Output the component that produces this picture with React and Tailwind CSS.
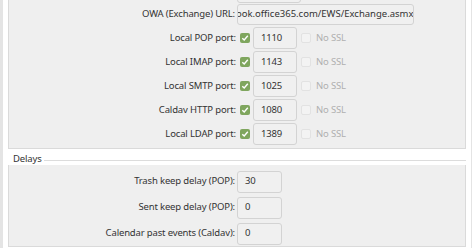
import React from 'react';

const ports = [
  { label: 'Local POP port:', value: '1110' },
  { label: 'Local IMAP port:', value: '1143' },
  { label: 'Local SMTP port:', value: '1025' },
  { label: 'Caldav HTTP port:', value: '1080' },
  { label: 'Local LDAP port:', value: '1389' },
];

const delays = [
  { label: 'Trash keep delay (POP):', value: '30' },
  { label: 'Sent keep delay (POP):', value: '0' },
  { label: 'Calendar past events (Caldav):', value: '0' },
];

function Check() {
  return (
    <span className="w-[10px] h-[10px] rounded-[2px] bg-[#7fa65e] flex items-center justify-center">
      <svg width="8" height="8" viewBox="0 0 8 8">
        <path d="M1.3 4.2 L3.2 6 L6.8 1.8" stroke="white" strokeWidth="1.4" fill="none" />
      </svg>
    </span>
  );
}

function Field({ value, className }) {
  return (
    <div className={`h-[22px] rounded-[3px] border border-[#d3d3d3] bg-[#f0f0f0] flex items-center px-[7px] text-[#333] overflow-hidden whitespace-nowrap ${className}`}>
      {value}
    </div>
  );
}

export default function App() {
  return (
    <div className="w-[474px] h-[248px] overflow-hidden bg-white flex text-[9.5px] tracking-[-0.15px] text-[#333]" style={{ fontFamily: '"Noto Sans", sans-serif' }}>
      <div className="w-[3px] bg-[#e4e4e4]" />
      <div className="w-[5px]" />
      <div className="w-[458px] flex flex-col">
        {/* connection group */}
        <div className="h-[149px] border-l border-r border-b border-[#dadada] bg-[#efefef] flex flex-col">
          <div className="flex mt-[-19px]">
            <div className="w-[228px]" />
            <Field value="" className="w-[64px]" />
          </div>
          <div className="flex items-center mt-[1px]">
            <div className="w-[228px] text-right pr-[2px]">OWA (Exchange) URL:</div>
            <div className="w-[177px] h-[21px] rounded-[3px] border border-[#d3d3d3] bg-[#f0f0f0] flex items-center overflow-hidden whitespace-nowrap tracking-normal">
              <span className="ml-[-2px]">ook.office365.com/EWS/Exchange.asmx</span>
            </div>
          </div>
          <div className="flex flex-col gap-[2px] mt-[2px]">
            {ports.map((p) => (
              <div key={p.label} className="flex items-center h-[22px]">
                <div className="w-[228px] text-right pr-[1px]">{p.label}</div>
                <span className="ml-[3px]"><Check /></span>
                <Field value={p.value} className="w-[44px] ml-[3px]" />
                <span className="w-[10px] h-[10px] ml-[4px] rounded-[2px] border border-[#e2e2e2] bg-[#f3f3f3]" />
                <span className="ml-[5px] text-[#b0b0b0]">No SSL</span>
              </div>
            ))}
          </div>
        </div>
        {/* delays group */}
        <div className="flex items-center mt-[4px] h-[12px]">
          <span className="pl-[5px] pr-[2px]">Delays</span>
          <div className="flex-1 h-px bg-[#dcdcdc] mt-[2px]" />
        </div>
        <div className="h-[82px] border-l border-r border-b border-[#dadada] bg-[#efefef] flex flex-col gap-[5px] pt-[6px]">
          {delays.map((d) => (
            <div key={d.label} className="flex items-center h-[21px]">
              <div className="w-[228px] text-right pr-[2px]">{d.label}</div>
              <Field value={d.value} className="w-[45px] h-[21px] px-[5px]" />
            </div>
          ))}
        </div>
      </div>
      <div className="w-[5px]" />
      <div className="w-[1px] bg-[#e4e4e4]" />
    </div>
  );
}
